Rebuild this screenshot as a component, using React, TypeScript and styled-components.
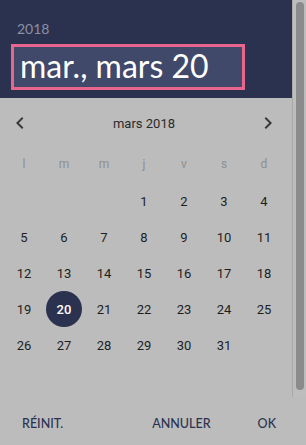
import React from "react";
import styled, { createGlobalStyle } from "styled-components";

const GlobalStyle = createGlobalStyle`
  html, body {
    margin: 0;
    padding: 0;
    background: #bcbcbc;
  }
  * {
    box-sizing: border-box;
  }
`;

const weekdays = ["l", "m", "m", "j", "v", "s", "d"];
// mars 2018 starts on a Thursday
const leading = 3;
const days = Array.from({ length: 31 }, (_, i) => i + 1);
const selected = 20;

export default function App() {
  const cells: (number | null)[] = [...Array(leading).fill(null), ...days];

  return (
    <>
      <GlobalStyle />
      <Dialog>
        <Body>
          <Content>
            <Header>
              <Year>2018</Year>
              <DateBox>mar., mars 20</DateBox>
            </Header>

            <Nav>
              <Arrow aria-label="précédent">
                <svg width="24" height="24" viewBox="0 0 24 24">
                  <path d="M15.41 7.41L14 6l-6 6 6 6 1.41-1.41L10.83 12z" fill="#3a3a3a" />
                </svg>
              </Arrow>
              <Month>mars 2018</Month>
              <Arrow aria-label="suivant">
                <svg width="24" height="24" viewBox="0 0 24 24">
                  <path d="M10 6L8.59 7.41 13.17 12l-4.58 4.59L10 18l6-6z" fill="#3a3a3a" />
                </svg>
              </Arrow>
            </Nav>

            <Grid>
              {weekdays.map((w, i) => (
                <Weekday key={i}>{w}</Weekday>
              ))}
            </Grid>

            <Days>
              {cells.map((d, i) => (
                <Day key={i} $selected={d === selected}>
                  {d ?? ""}
                </Day>
              ))}
            </Days>
          </Content>
          <ScrollTrack>
            <ScrollThumb />
          </ScrollTrack>
        </Body>

        <Actions>
          <Button>Réinit.</Button>
          <Spacer />
          <Button>Annuler</Button>
          <Button>OK</Button>
        </Actions>
      </Dialog>
    </>
  );
}

const Dialog = styled.div`
  width: 306px;
  height: 445px;
  display: flex;
  flex-direction: column;
  background: #bcbcbc;
  font-family: Lato, "Noto Sans", sans-serif;
`;

const Body = styled.div`
  height: 397px;
  flex: 0 0 auto;
  display: flex;
  overflow: hidden;
`;

const Content = styled.div`
  width: 292px;
  flex: 0 0 auto;
`;

const ScrollTrack = styled.div`
  flex: 1;
  background: #bdbdbd;
  border-left: 1px solid #a9a9a9;
  padding: 2px 2px 7px 3px;
  display: flex;
`;

const ScrollThumb = styled.div`
  flex: 1;
  background: #8b8b8b;
  border-radius: 4px;
`;

const Header = styled.div`
  background: #2b3250;
  height: 98px;
  padding: 20px 0 0 11px;
`;

const Year = styled.div`
  color: #8b90a1;
  font-size: 14px;
  line-height: 18px;
  padding-left: 6px;
`;

const DateBox = styled.div`
  margin-top: 6px;
  width: 234px;
  height: 46px;
  border: 3px solid #e8668e;
  background: #404969;
  color: #ffffff;
  font-size: 32px;
  line-height: 38px;
  padding-left: 6px;
`;

const Nav = styled.div`
  display: flex;
  align-items: center;
  justify-content: space-between;
  padding: 13px 12px 0 8px;
  height: 37px;
`;

const Arrow = styled.div`
  width: 24px;
  height: 24px;
  display: flex;
  align-items: center;
  justify-content: center;
`;

const Month = styled.div`
  font-family: Roboto, sans-serif;
  font-size: 13px;
  color: #2a2a2a;
`;

const Grid = styled.div`
  display: grid;
  grid-template-columns: repeat(7, 40px);
  padding: 22px 0 0 4px;
`;

const Weekday = styled.div`
  height: 18px;
  text-align: center;
  font-family: Roboto, sans-serif;
  font-size: 12px;
  color: #8f8f8f;
`;

const Days = styled.div`
  display: grid;
  grid-template-columns: repeat(7, 36px);
  column-gap: 4px;
  padding: 8px 0 0 6px;
`;

const Day = styled.div<{ $selected: boolean }>`
  width: 36px;
  height: 36px;
  border-radius: 50%;
  display: flex;
  align-items: center;
  justify-content: center;
  font-family: Roboto, sans-serif;
  font-size: 13px;
  font-weight: ${(p) => (p.$selected ? 500 : 400)};
  color: ${(p) => (p.$selected ? "#ffffff" : "#1e1e1e")};
  background: ${(p) => (p.$selected ? "#2b3250" : "transparent")};
`;

const Actions = styled.div`
  flex: 1;
  display: flex;
  align-items: center;
  padding: 4px 30px 0 22px;
`;

const Spacer = styled.div`
  flex: 1;
`;

const Button = styled.div`
  font-family: Lato, sans-serif;
  font-size: 12.5px;
  font-weight: 500;
  color: #2b3250;
  text-transform: uppercase;

  & + & {
    margin-left: 47px;
  }
`;
